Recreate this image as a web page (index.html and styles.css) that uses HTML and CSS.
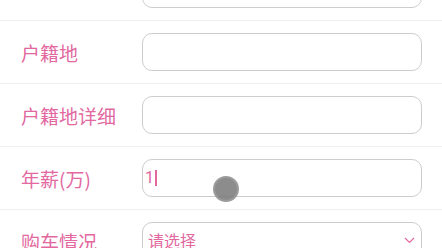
FILE: index.html
```html
<!DOCTYPE html>
<html lang="zh">
<head>
<meta charset="utf-8">
<link rel="stylesheet" href="styles.css">
</head>
<body>
<div class="form">
  <div class="row">
    <div class="label"></div>
    <div class="field"></div>
  </div>
  <div class="row">
    <div class="label">户籍地</div>
    <div class="field"></div>
  </div>
  <div class="row">
    <div class="label">户籍地详细</div>
    <div class="field"></div>
  </div>
  <div class="row">
    <div class="label">年薪(万)</div>
    <div class="field field-text">1<span class="caret"></span></div>
  </div>
  <div class="row">
    <div class="label">购车情况</div>
    <div class="field field-select">
      <span class="placeholder">请选择</span>
      <svg class="chev" width="11" height="7" viewBox="0 0 11 7"><polyline points="1,1 5.5,5.5 10,1" fill="none" stroke="#e2689f" stroke-width="1.2"/></svg>
    </div>
  </div>
</div>
<div class="touch"></div>
</body>
</html>
```
FILE: styles.css
```css
html, body {
  margin: 0;
  padding: 0;
  background: #ffffff;
  overflow: hidden;
  height: 248px;
}
body {
  font-family: "Noto Sans CJK SC", "Noto Sans", sans-serif;
  position: relative;
}
.form {
  margin-top: -42px;
}
.row {
  height: 62px;
  border-bottom: 1px solid #efefef;
  display: flex;
  align-items: center;
  padding-left: 21px;
}
.label {
  width: 121px;
  flex: none;
  font-size: 19px;
  color: #e2689f;
  line-height: 1;
  white-space: nowrap;
}
.field {
  box-sizing: border-box;
  width: 280px;
  height: 38px;
  border: 1px solid #cdcdcd;
  border-radius: 10px;
  display: flex;
  align-items: center;
  font-size: 16px;
  color: #e2689f;
}
.field-text {
  padding-left: 2px;
  font-family: Roboto, "Noto Sans", sans-serif;
  font-size: 16px;
  line-height: 1;
}
.caret {
  display: inline-block;
  width: 1.5px;
  height: 16px;
  background: #e2689f;
  margin-left: 1px;
}
.field-select {
  padding-left: 5px;
  padding-right: 6px;
  justify-content: space-between;
}
.placeholder {
  line-height: 1;
  margin-top: -2px;
}
.chev {
  margin-top: -2px;
}
.touch {
  position: absolute;
  left: 213px;
  top: 176px;
  width: 26px;
  height: 26px;
  box-sizing: border-box;
  border-radius: 50%;
  background: rgba(120, 120, 120, 0.85);
  border: 2px solid rgba(160, 160, 160, 0.8);
}
```
